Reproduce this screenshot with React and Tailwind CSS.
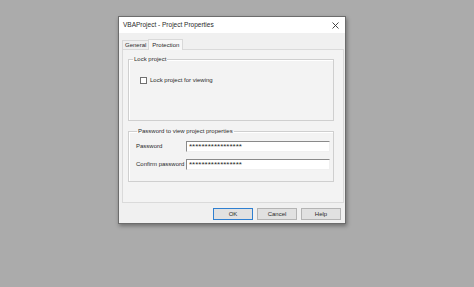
const Field = ({ label, value }) => (
  <div className="flex items-center h-[11px]">
    <span className="w-[50px] text-[6px]">{label}</span>
    <div className="w-[144px] h-[11px] bg-white border-t-[1.5px] border-l border-t-[#8a8a8a] border-l-[#8a8a8a] border-r border-b border-r-[#f0f0f0] border-b-[#f0f0f0] flex items-center pl-[2px] text-[8px] leading-none">
      {value}
    </div>
  </div>
);

const Btn = ({ children, primary }) => (
  <button
    className={
      primary
        ? "w-[40px] h-[12px] bg-[#e1e1e1] border border-[#2f7fd0] text-[6px] leading-none"
        : "w-[40px] h-[12px] bg-[#e1e1e1] border border-[#b4b4b4] text-[6px] leading-none"
    }
  >
    {children}
  </button>
);

export default function App() {
  return (
    <div className="w-[474px] h-[287px] bg-[#ababab] pt-[16px] pl-[118px] text-[#2a2a2a] font-['Liberation_Sans',Arial,sans-serif]">
      <div className="w-[228px] h-[208px] flex flex-col border border-[#6c6c6c] shadow-[1px_2px_4px_rgba(0,0,0,0.35)]">
        {/* Title bar */}
        <div className="h-[16px] bg-white flex items-center justify-between pl-[4px] pr-[6px]">
          <span className="text-[6.5px]">VBAProject - Project Properties</span>
          <svg width="7" height="7" viewBox="0 0 7 7" className="text-[#333]">
            <path d="M0.5 0.5 L6.5 6.5 M6.5 0.5 L0.5 6.5" stroke="currentColor" strokeWidth="0.9" />
          </svg>
        </div>

        {/* Body */}
        <div className="flex-1 bg-[#f0f0f0] flex flex-col pl-[3px] pr-[1px] pt-[5px]">
          {/* Tabs */}
          <div className="flex items-end h-[11px] text-[6px]">
            <div className="h-[9px] px-[2px] flex items-center border-t border-l border-[#d9d9d9] bg-[#f0f0f0]">General</div>
            <div className="h-[11px] px-[3px] flex items-center bg-[#f7f7f7] border-t border-l border-r border-[#d9d9d9] -mb-px relative">Protection</div>
          </div>

          {/* Panel */}
          <div className="w-[222px] h-[154px] bg-[#f3f3f3] border border-[#dadada] pl-[5px] pt-[5px] flex flex-col gap-[6px]">
            <fieldset className="w-[206px] h-[66px] border border-[#cfcfcf] shadow-[inset_1px_1px_0_#fff] px-[3px]">
              <legend className="text-[6px] px-[1px] leading-[8px] ml-[1px]">Lock project</legend>
              <label className="flex items-center gap-[3px] mt-[13px] ml-[8px] text-[6px]">
                <span className="w-[7px] h-[7px] bg-white border border-[#707070]" />
                Lock project for viewing
              </label>
            </fieldset>

            <fieldset className="w-[206px] h-[55px] border border-[#cfcfcf] shadow-[inset_1px_1px_0_#fff] pl-[7px]">
              <legend className="text-[6px] px-[1px] leading-[8px] ml-[1px]">Password to view project properties</legend>
              <div className="flex flex-col gap-[7px] mt-[6px]">
                <Field label="Password" value="*****************" />
                <Field label="Confirm password" value="*****************" />
              </div>
            </fieldset>
          </div>

          {/* Buttons */}
          <div className="flex justify-end gap-[4px] pr-[3px] mt-[5px]">
            <Btn primary>OK</Btn>
            <Btn>Cancel</Btn>
            <Btn>Help</Btn>
          </div>
        </div>
      </div>
    </div>
  );
}
